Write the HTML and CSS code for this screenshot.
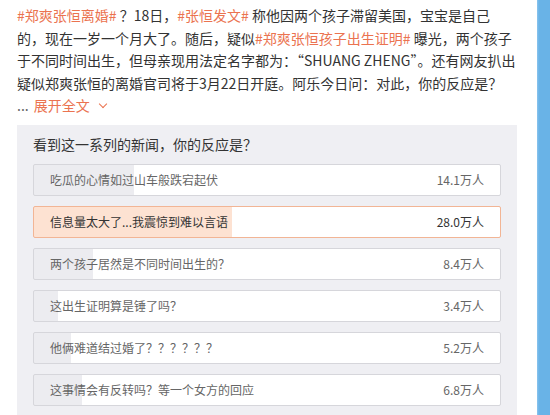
FILE: index.html
```html
<!DOCTYPE html>
<html lang="zh-CN">
<head>
    <meta charset="UTF-8">
    <meta name="viewport" content="width=device-width, initial-scale=1.0">
    <title>看到这一系列的新闻，你的反应是？</title>
    <link rel="stylesheet" href="styles.css">
</head>
<body>
    <div class="page">
        <div class="feed">
            <p class="post-text">
                <a class="topic" href="#">#郑爽张恒离婚#</a> ？18日，<a class="topic" href="#">#张恒发文#</a> 称他因两个孩子滞留美国，宝宝是自己<br>
                的，现在一岁一个月大了。随后，疑似<a class="topic" href="#">#郑爽张恒孩子出生证明#</a> 曝光，两个孩子<br>
                于不同时间出生，但母亲现用法定名字都为：“SHUANG ZHENG”。还有网友扒出<br>
                疑似郑爽张恒的离婚官司将于3月22日开庭。阿乐今日问：对此，你的反应是？<br>
                <span class="ellipsis">...</span> <a class="expand" href="#">展开全文<span class="chevron"></span></a>
            </p>

            <div class="poll">
                <h3 class="poll-title">看到这一系列的新闻，你的反应是？</h3>
                <ul class="poll-options">
                    <li class="option" style="--pct: 21.4%">
                        <span class="option-label">吃瓜的心情如过山车般跌宕起伏</span>
                        <span class="option-count">14.1万人</span>
                    </li>
                    <li class="option option-voted" style="--pct: 42.5%">
                        <span class="option-label">信息量太大了...我震惊到难以言语</span>
                        <span class="option-count">28.0万人</span>
                    </li>
                    <li class="option" style="--pct: 12.7%">
                        <span class="option-label">两个孩子居然是不同时间出生的？</span>
                        <span class="option-count">8.4万人</span>
                    </li>
                    <li class="option" style="--pct: 5.2%">
                        <span class="option-label">这出生证明算是锤了吗？</span>
                        <span class="option-count">3.4万人</span>
                    </li>
                    <li class="option" style="--pct: 7.9%">
                        <span class="option-label">他俩难道结过婚了？？？？？？</span>
                        <span class="option-count">5.2万人</span>
                    </li>
                    <li class="option" style="--pct: 10.3%">
                        <span class="option-label">这事情会有反转吗？等一个女方的回应</span>
                        <span class="option-count">6.8万人</span>
                    </li>
                </ul>
            </div>
        </div>

        <div class="sidebar"></div>
    </div>
</body>
</html>
```

FILE: styles.css
```css
* {
    margin: 0;
    padding: 0;
    box-sizing: border-box;
}

body {
    font-family: "Noto Sans CJK SC", "Microsoft YaHei", sans-serif;
    background: white;
    color: #333;
    overflow: hidden;
}

.page {
    display: flex;
    height: 415px;
}

.feed {
    width: 500px;
    margin-left: 17px;
    flex-shrink: 0;
}

.sidebar {
    margin-left: 20px;
    flex: 1;
    background: linear-gradient(90deg, #8cc5ee 0, #69b3e7 2px, #69b3e7 100%);
}

/* post body */
.post-text {
    padding-top: 4px;
    font-size: 14px;
    line-height: 22.5px;
    white-space: nowrap;
    color: #333;
}

.topic,
.expand {
    color: #eb7350;
    text-decoration: none;
}

.ellipsis {
    color: #666;
}

.expand {
    margin-left: 2px;
}

.chevron {
    display: inline-block;
    width: 6px;
    height: 6px;
    margin-left: 10px;
    border-right: 1.5px solid #eb7350;
    border-bottom: 1.5px solid #eb7350;
    transform: translateY(-4px) rotate(45deg);
}

/* poll card */
.poll {
    margin-top: 8px;
    background: #efeff3;
    padding: 9px 16px 12px;
}

.poll-title {
    font-size: 14px;
    font-weight: normal;
    line-height: 20px;
    color: #333;
    margin-bottom: 10px;
}

.poll-options {
    list-style: none;
    display: flex;
    flex-direction: column;
    gap: 10px;
}

.option {
    display: flex;
    align-items: center;
    justify-content: space-between;
    height: 32px;
    padding: 0 16px;
    font-size: 12px;
    color: #666;
    border: 1px solid #d6d6db;
    border-radius: 2px;
    background: linear-gradient(90deg, #ececf0 var(--pct), white var(--pct));
}

.option-voted {
    color: #333;
    border-color: #f2b595;
    background: linear-gradient(90deg, #fde2d2 var(--pct), white var(--pct));
}
```
